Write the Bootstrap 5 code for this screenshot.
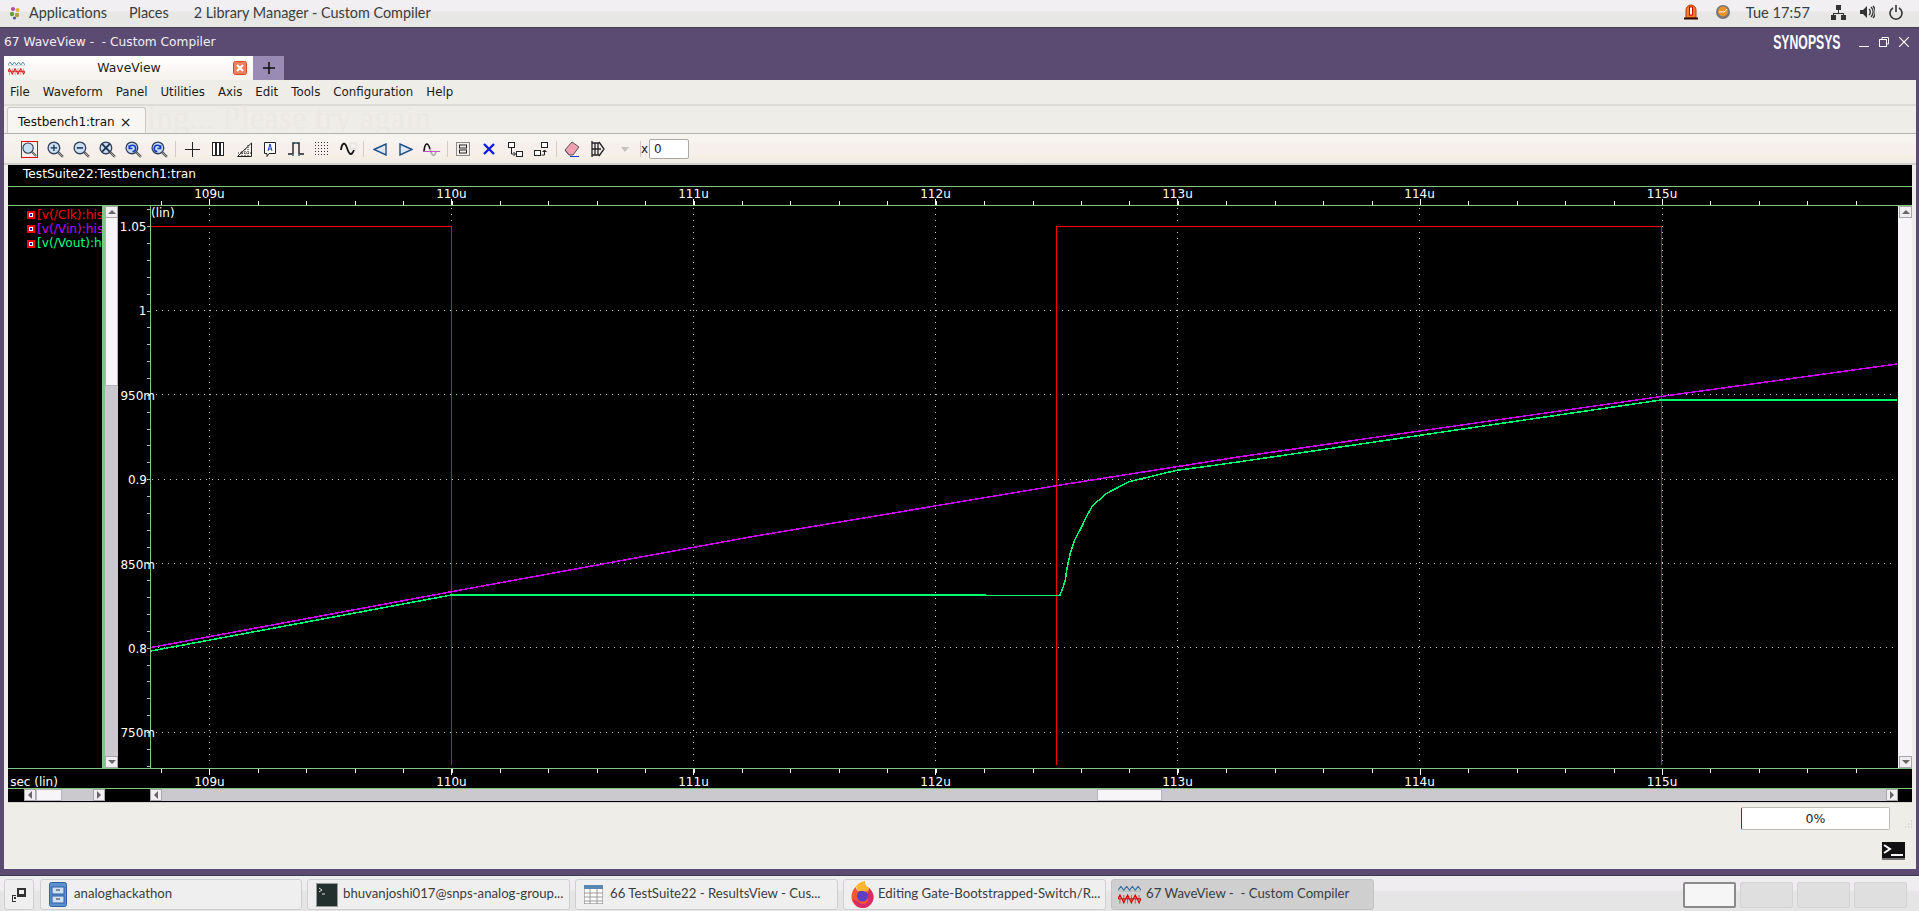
<!DOCTYPE html>
<html lang="en">
<head>
<meta charset="utf-8">
<title>WaveView</title>
<link href="https://cdn.jsdelivr.net/npm/bootstrap@5.3.0/dist/css/bootstrap.min.css" rel="stylesheet">
<style>
html,body{height:911px;overflow:hidden;background:#5b4a72}
body{font-family:"DejaVu Sans",sans-serif;font-size:12px;color:#2e3436}
.ui{font-family:Lato,"Noto Sans",sans-serif}
svg{display:block;flex:none}
.gnome-bar{height:28px;padding-bottom:2px;background:linear-gradient(#f1eff2 0,#f1eff2 40%,#e7e7e5 45%,#e7e7e5 100%);border-bottom:1px solid #45414f;font-size:14.4px;color:#3a3d3e;flex:none}
.gnome-app{margin-left:9px}
.gnome-places{margin-left:22px}
.gnome-win{margin-left:25px}
.gnome-clock{margin-left:16px;font-size:14.6px}
.gnome-tray{margin-right:16px;gap:0}
.tray-slot{margin-left:18px}
.tray-slot2{margin-left:21px}
.tray-slot3{margin-left:14px}
.shell{flex:1;padding:0 3px 0 4px;background:#5b4a72;min-height:0}
.title-row{height:28px;color:#f2f0f5;flex:none;font-size:12.2px;padding-right:7px}
.brand{font-family:"Liberation Sans",sans-serif;font-weight:700;font-size:17px;color:#fff;margin-right:18px;line-height:1;transform:scaleX(.72) scaleY(1.15);transform-origin:right center}
.win-btns{gap:10px}
.tab-row{height:24px;flex:none}
.wave-tab{width:249px;background:linear-gradient(#fff,#f5f1ec);font-size:12.4px;color:#222;padding:0 6px 0 4px}
.wave-name{flex:1;text-align:center}
.plus-tab{width:31px;background:#9a8bb5;color:#111}
.work{flex:1;background:#efede8;min-height:0}
.menu-row{height:26px;padding-top:1px;border-bottom:2px solid #dcdbd6;padding-left:6px;gap:13px;font-size:11.8px;color:#1b1b1b;flex:none}
.doc-row{height:27px;flex:none;padding-left:3px}
.doc-tab{width:139px;height:27px;margin-top:1px;background:#f8f6f2;border:1px solid #c9c8c3;border-bottom:0;border-radius:3px 3px 0 0;padding:2px 0 0 10px;font-size:12px;color:#111;flex:none}
.doc-x{margin-left:5px;font-size:14px;line-height:1}
.ghost{font-family:"Liberation Serif",serif;font-size:33px;line-height:25px;color:#ebe9e4;margin-left:1px;white-space:nowrap}
.tool-row{height:32px;flex:none;border-top:1px solid #b3b3ae;border-bottom:2px solid #d0d0cc;background:linear-gradient(#f6f4ef 0,#f6f4ef 30%,#f6efeb 35%,#f6efeb 70%,#f5efe6 75%,#efede8 100%);padding:1px 0 0 12px}
.tool-i{width:26px;display:flex;justify-content:center;flex:none}
.tool-sep{width:5.5px;flex:none;display:flex;justify-content:center;height:16px}
.tool-sep::after{content:"";width:1px;background:#cfcdc8;height:100%}
.tool-sep.wide{width:7px}
.tool-active svg{outline:1.5px solid #e00}
.x-label{font-size:12px;color:#222;width:8px;margin-left:-2px}
.x-field{width:40px;height:20px;background:#fff;border:1px solid #a9a8a3;border-radius:2px;padding-left:4px;line-height:18px;color:#222}
.panel{height:637px;margin:0 4px;background:#000;color:#fff;flex:none;box-shadow:0 1px 0 #d5d4cf}
.panel-head{height:22px;border-bottom:1px solid #86c286;padding-left:15px;flex:none;line-height:19px;font-size:12.2px}
.ruler{height:19px;flex:none;border-bottom:1px solid #86c286}
.mid{height:562px;flex:none}
.legend{width:94px;flex:none;overflow:hidden;padding:2px 0 0 19px;font-size:12.2px;line-height:14.2px;white-space:nowrap}
.legend-row{gap:2px}
.lg-mark{width:8px;height:8px;background:#fff;border:2px solid #f00;flex:none;position:relative}
.lg-mark::after{content:"";position:absolute;left:1px;top:1px;width:2px;height:2px;background:#00c}
.c-clk{color:#f00}.c-vin{color:#c000ff}.c-vout{color:#00ff7f}
.sash{width:3px;background:#86c286;flex:none}
.vsb{width:13px;flex:none;background:#cbc9cd}
.vsb.free{width:14px;background:#f8f5f8}
.vthumb{height:168px;background:#f8f5f8;border:1px solid #b6b4b8;border-top:0;flex:none}
.vfill{flex:1}
.sb-btn{background:#f0eef0;border:1px solid #a9a7ab;display:flex;align-items:center;justify-content:center;color:#555;flex:none}
.sb-btn.v{height:12px;width:13px}
.sb-btn.h{width:12px;height:12px}
.tri-u{width:0;height:0;border-left:4px solid transparent;border-right:4px solid transparent;border-bottom:4px solid #666}
.tri-d{width:0;height:0;border-left:4px solid transparent;border-right:4px solid transparent;border-top:4px solid #666}
.tri-l{width:0;height:0;border-top:4px solid transparent;border-bottom:4px solid transparent;border-right:4px solid #666}
.tri-r{width:0;height:0;border-top:4px solid transparent;border-bottom:4px solid transparent;border-left:4px solid #666}
.bottom-ruler{height:21px;flex:none;border-top:1px solid #86c286;border-bottom:1px solid #86c286}
.hsb-row{height:12px;flex:none}
.gap-a{width:16px}.gap-b{width:45px}.gap-c{width:14px}
.h-thumb{background:#f8f5f8;height:12px;border:1px solid #b6b4b8;flex:none}
.h-thumb.small{width:26px}
.h-thumb.big{width:65px}
.h-track{background:#cbc9cd;height:12px}
.t1{width:31px}.t2{width:935px}.t3{flex:1}
.status{flex:1;position:relative;min-height:0}
.progress-box{position:absolute;left:1737px;top:5px;width:149px;height:23px;background:#fff;border:1px solid #bdbbb6;border-left:1px solid #c00;border-radius:2px;text-align:center;line-height:21px;color:#222;font-size:12.5px}
.grip{position:absolute;left:1899px;top:18px}
.term-btn{position:absolute;left:1878px;top:40px}
.win-foot{height:6px;flex:none}
.task{height:36px;flex:none;border-top:1px solid #3f3a4a;background:linear-gradient(#efedf0 0,#efedf0 40%,#e6e5e6 45%);font-size:13.2px;color:#3a3d3e;padding:3px 0 1px 4px}
.task-btn{height:31px;background:#f0eff0;border:1px solid #cfcfcf;border-radius:3px;padding-left:8px;margin-right:5px;white-space:nowrap;overflow:hidden;gap:7px;flex:none}
.task-btn span{margin-top:-2px}
.tb0{width:30px;padding-left:6px}
.tb1{width:262px;margin-left:1px}.tb2{width:263px;gap:5px}.tb3{width:263px}.tb4{width:263px;gap:4px;padding-left:7px}.tb5{width:263px;gap:5px;padding-left:6px;background:#cfcfcf;border-color:#c2c2c2;margin-right:0}
.pager{margin-left:auto;margin-right:12px;gap:4px}
.ws{width:53px;height:26px;background:#dfdfdf;border:1px solid #d3d3d3;border-radius:2px}
.ws.on{background:#f6f6f6;border:2px solid #8a8a8a}
</style>
</head>
<body class="d-flex flex-column">
<svg class="d-none" aria-hidden="true">
<defs>
<symbol id="mag" viewBox="0 0 16 16"><circle cx="6.500" cy="6.500" r="5.500" fill="#c9dff2" stroke="#2f3d58" stroke-width="1.200"/><path d="M10.500 10.500L15 15" stroke="#555" stroke-width="2.200"/><path d="M11 11L15 15" stroke="#ddd" stroke-width=".6"/></symbol>
<symbol id="wave" viewBox="0 0 24 20"><path d="M0 5l3-4 3 4 3-4 3 4 3-4 3 4 3-4 3 4" fill="none" stroke="#3a6ea5" stroke-width="1.200"/><path d="M0 6h24" stroke="#8aa" stroke-width=".6"/><path d="M0 14h24" stroke="#c00" stroke-width="1"/><path d="M0 14l2-4 2 4 2 4 2-4 2-4 2 4 2 4 2-4 2-4 2 4 2 4 2-4" fill="none" stroke="#d00" stroke-width="1.200"/><path d="M2 10v9M6 10v9M10 10v9M14 10v9M18 10v9M22 10v9" stroke="#c00" stroke-width=".6"/></symbol>
</defs>
</svg>

<header class="gnome-bar ui d-flex align-items-center">
  <svg class="gnome-app" width="12" height="14" viewBox="0 0 12 14"><circle cx="4" cy="3" r="2" fill="#b04aa0"/><circle cx="8.500" cy="4" r="2" fill="#e0b030"/><circle cx="3" cy="8" r="2.200" fill="#6a9a3a"/><circle cx="8" cy="9" r="2.200" fill="#b0a040"/><circle cx="5.500" cy="12" r="1.600" fill="#5a5aa0"/></svg>
  <span class="ms-2">Applications</span>
  <span class="gnome-places">Places</span>
  <span class="gnome-win">2 Library Manager - Custom Compiler</span>
  <div class="ms-auto gnome-tray d-flex align-items-center">
    <svg width="14" height="16" viewBox="0 0 14 16"><path d="M2 14V6a5 5 0 0 1 10 0v8z" fill="#f08020" stroke="#b04010"/><path d="M0 14.500h14" stroke="#300" stroke-width="2"/><rect x="5.500" y="3" width="3" height="8" fill="#fff" stroke="#c00"/></svg>
    <svg class="tray-slot" width="14" height="14" viewBox="0 0 14 14"><circle cx="7" cy="7" r="7" fill="#777"/><circle cx="7" cy="6.500" r="5" fill="#e8922a"/><path d="M3 7c3-1 5 2 8-3" stroke="#fff" fill="none"/></svg>
    <span class="gnome-clock">Tue 17:57</span>
    <svg class="tray-slot2" width="15" height="15" viewBox="0 0 15 15" fill="#333"><rect x="5" y="0" width="5" height="5"/><rect x="0" y="10" width="5" height="5"/><rect x="10" y="10" width="5" height="5"/><path d="M7 5v3H2v2h1V9h9v1h1V8H8V5z"/></svg>
    <svg class="tray-slot3" width="15" height="14" viewBox="0 0 15 14"><path d="M0 5h3l4-4v12l-4-4H0z" fill="#333"/><path d="M9 4a4 4 0 0 1 0 6M11 2a7 7 0 0 1 0 10M13 1a9 9 0 0 1 0 12" stroke="#333" fill="none" stroke-width="1.300"/></svg>
    <svg class="tray-slot3" width="14" height="15" viewBox="0 0 14 15"><path d="M4 3a6 6 0 1 0 6 0" stroke="#333" fill="none" stroke-width="1.600"/><path d="M7 0v7" stroke="#333" stroke-width="1.600"/></svg>
  </div>
</header>

<main class="shell d-flex flex-column">
  <div class="title-row d-flex align-items-center">
    <span>67 WaveView -&nbsp; - Custom Compiler</span>
    <span class="brand ms-auto">SYNOPSYS</span>
    <div class="win-btns d-flex align-items-center">
      <svg width="10" height="10" viewBox="0 0 10 10"><path d="M0 9.500h10" stroke="#fff"/></svg>
      <svg width="10" height="10" viewBox="0 0 10 10" fill="none" stroke="#fff"><rect x=".5" y="2.500" width="7" height="7"/><path d="M3 2.500V.5h6.500V7H7.500"/></svg>
      <svg width="10" height="10" viewBox="0 0 10 10"><path d="M0 0l10 10M10 0L0 10" stroke="#fff" stroke-width="1.200"/></svg>
    </div>
  </div>
  <div class="tab-row d-flex">
    <div class="wave-tab d-flex align-items-center">
      <svg width="17" height="15" viewBox="0 0 24 20"><use href="#wave"/></svg>
      <span class="wave-name">WaveView</span>
      <svg width="14" height="14" viewBox="0 0 14 14"><rect x=".5" y=".5" width="13" height="13" rx="2" fill="#ee8060" stroke="#d8482a"/><path d="M4 4l6 6M10 4l-6 6" stroke="#fff" stroke-width="2"/></svg>
    </div>
    <div class="plus-tab d-flex align-items-center justify-content-center">
      <svg width="12" height="12" viewBox="0 0 12 12"><path d="M6 0v12M0 6h12" stroke="#111" stroke-width="1.500"/></svg>
    </div>
  </div>
  <div class="work d-flex flex-column">
    <nav class="menu-row d-flex align-items-center">
      <span>File</span><span>Waveform</span><span>Panel</span><span>Utilities</span><span>Axis</span><span>Edit</span><span>Tools</span><span>Configuration</span><span>Help</span>
    </nav>
    <div class="doc-row d-flex">
      <div class="doc-tab d-flex align-items-center"><span>Testbench1:tran</span><span class="doc-x">×</span></div>
      <span class="ghost">ing... Please try again</span>
    </div>
    <div class="tool-row d-flex align-items-center">
      <div class="tool-i tool-active"><svg width="15" height="15" viewBox="0 0 16 16"><use href="#mag"/></svg></div>
      <div class="tool-i"><svg width="17" height="17" viewBox="0 0 16 16"><use href="#mag"/><path d="M3.500 6.500h6M6.500 3.500v6" stroke="#1a2a44" stroke-width="1.200"/></svg></div>
      <div class="tool-i"><svg width="17" height="17" viewBox="0 0 16 16"><use href="#mag"/><path d="M3.500 6.500h6" stroke="#1a2a44" stroke-width="1.400"/></svg></div>
      <div class="tool-i"><svg width="17" height="17" viewBox="0 0 16 16"><use href="#mag"/><path d="M3 3l7 7M10 3l-7 7" stroke="#1a2a44" stroke-width="1.600"/></svg></div>
      <div class="tool-i"><svg width="17" height="17" viewBox="0 0 16 16"><use href="#mag"/><path d="M4 7a3 3 0 1 1 3 3M4 4v3h3" fill="none" stroke="#1438c8" stroke-width="1.500"/></svg></div>
      <div class="tool-i"><svg width="17" height="17" viewBox="0 0 16 16"><use href="#mag"/><path d="M9 7a3 3 0 1 0-3 3M9 4v3H6" fill="none" stroke="#1438c8" stroke-width="1.500"/></svg></div>
      <div class="tool-sep wide"></div>
      <div class="tool-i"><svg width="15" height="15" viewBox="0 0 15 15"><path d="M0 7.500h15M7.500 0v15" stroke="#222"/></svg></div>
      <div class="tool-i"><svg width="12" height="14" viewBox="0 0 12 14" fill="#fff" stroke="#222"><rect x=".5" y=".5" width="3" height="13"/><rect x="4.500" y=".5" width="3" height="13"/><rect x="8.500" y=".5" width="3" height="13"/></svg></div>
      <div class="tool-i"><svg width="15" height="15" viewBox="0 0 15 15" fill="none" stroke="#222"><path d="M.5 14.500h14V1z"/><path d="M5 14V9M8 14V6M11 14V3M1 11h13" stroke-dasharray="1 1"/></svg></div>
      <div class="tool-i"><svg width="12" height="16" viewBox="0 0 12 16"><path d="M.5 1.500h11v11H5l-2 3v-3H.5z" fill="#fff" stroke="#222"/><path d="M4 10l2-7 2 7M4.600 8h2.800" fill="none" stroke="#1438c8"/></svg></div>
      <div class="tool-i"><svg width="16" height="15" viewBox="0 0 16 15"><path d="M0 12h5V1h6v11h5" fill="none" stroke="#222" stroke-width="1.400"/><path d="M5 14v-2M11 14v-2M7 1h2" stroke="#58858f" stroke-width="2"/></svg></div>
      <div class="tool-i"><svg width="14" height="14" viewBox="0 0 14 14" fill="none"><path d="M0 .5h14M0 3.500h14M0 6.500h14M0 9.500h14M0 12.500h14" stroke="#333" stroke-dasharray="1 2"/></svg></div>
      <div class="tool-i"><svg width="17" height="15" viewBox="0 0 17 15" fill="none"><path d="M1 8C2 0 5 0 7 6s4 9 7 2" stroke="#111" stroke-width="1.800"/><rect x="10" y="1" width="6" height="6" stroke="#ddd"/></svg></div>
      <div class="tool-sep"></div>
      <div class="tool-i"><svg width="14" height="13" viewBox="0 0 14 13"><path d="M1 6.500L13 1v11z" fill="#dce8f2" stroke="#1c4e86" stroke-width="1.400"/></svg></div>
      <div class="tool-i"><svg width="14" height="13" viewBox="0 0 14 13"><path d="M13 6.500L1 1v11z" fill="#dce8f2" stroke="#1c4e86" stroke-width="1.400"/></svg></div>
      <div class="tool-i"><svg width="17" height="15" viewBox="0 0 17 15" fill="none"><path d="M1 9C2 0 5 0 7 7" stroke="#111" stroke-width="1.600"/><path d="M7 7c2 8 5 8 6 2" stroke="#aaa" stroke-width="1.600"/><path d="M0 9.500h17" stroke="#c050c0"/></svg></div>
      <div class="tool-sep"></div>
      <div class="tool-i"><svg width="14" height="14" viewBox="0 0 14 14" fill="none" stroke="#222"><rect x=".5" y=".5" width="13" height="13" stroke-dasharray="1 1"/><rect x="3.500" y="3" width="7" height="3"/><rect x="3.500" y="8" width="7" height="3"/></svg></div>
      <div class="tool-i"><svg width="12" height="12" viewBox="0 0 12 12"><path d="M1 1l10 10M11 1L1 11" stroke="#0a1ae8" stroke-width="2.400"/></svg></div>
      <div class="tool-i"><svg width="15" height="15" viewBox="0 0 15 15" fill="#fff" stroke="#222"><rect x=".5" y=".5" width="6" height="5"/><rect x="8.500" y="9.500" width="6" height="5"/><path d="M3.500 6v6h4M5.500 10l2 2-2 2" fill="none"/></svg></div>
      <div class="tool-i"><svg width="15" height="15" viewBox="0 0 15 15" fill="#fff" stroke="#222"><rect x="7.500" y=".5" width="6" height="5"/><rect x=".5" y="8.500" width="6" height="5"/><path d="M10.500 9v4h-3" fill="none"/><path d="M8.500 10l2-2 2 2" fill="#222"/></svg></div>
      <div class="tool-sep"></div>
      <div class="tool-i"><svg width="17" height="16" viewBox="0 0 17 16"><path d="M1 9l7-8 7 5-6 8H5z" fill="#f0a0b0" stroke="#555"/><path d="M1 9l4 5" stroke="#555"/><path d="M6 15.500h9" stroke="#1438c8"/></svg></div>
      <div class="tool-i"><svg width="15" height="16" viewBox="0 0 15 16" fill="none" stroke="#222" stroke-width="1.300"><path d="M1 0v16M1 2h7M1 8h9M1 14h7M4 2v12M7 2v12M8 1l5 7-5 7"/></svg></div>
      <div class="tool-i"><svg width="8" height="5" viewBox="0 0 8 5"><path d="M0 0h8L4 5z" fill="#c4c3be"/></svg></div>
      <div class="tool-sep"></div>
      <span class="x-label">x</span>
      <div class="x-field">0</div>
    </div>

    <section class="panel d-flex flex-column">
      <div class="panel-head">TestSuite22:Testbench1:tran</div>
      <div class="ruler">
        <svg width="1904" height="18" viewBox="8 187 1904 18" shape-rendering="crispEdges" font-family="DejaVu Sans" font-size="12" fill="#fff" text-anchor="middle">
          <line x1="161" x2="1860" y1="203" y2="203" stroke="#fff" stroke-width="4" stroke-dasharray="1 47.420"/>
          <line x1="209" x2="1860" y1="202" y2="202" stroke="#fff" stroke-width="6" stroke-dasharray="1 241.100"/>
          <text x="209.400" y="197.500">109u</text><text x="451.400" y="197.500">110u</text><text x="693.500" y="197.500">111u</text><text x="935.500" y="197.500">112u</text><text x="1177.500" y="197.500">113u</text><text x="1419.600" y="197.500">114u</text><text x="1662" y="197.500">115u</text>
        </svg>
      </div>
      <div class="mid d-flex">
        <aside class="legend">
          <div class="legend-row d-flex align-items-center c-clk"><span class="lg-mark"></span><span>[v(/Clk):his</span></div>
          <div class="legend-row d-flex align-items-center c-vin"><span class="lg-mark"></span><span>[v(/Vin):his</span></div>
          <div class="legend-row d-flex align-items-center c-vout"><span class="lg-mark"></span><span>[v(/Vout):h</span></div>
        </aside>
        <div class="sash"></div>
        <div class="vsb d-flex flex-column">
          <div class="sb-btn v"><span class="tri-u"></span></div>
          <div class="vthumb"></div>
          <div class="vfill"></div>
          <div class="sb-btn v"><span class="tri-d"></span></div>
        </div>
        <svg width="1780" height="562" viewBox="118 206 1780 562" font-family="DejaVu Sans" font-size="12" fill="#fff">
          <g stroke="#ccc" stroke-dasharray="1 5" shape-rendering="crispEdges">
            <path d="M156 310.500H1896M156 394.500H1896M152 479.500H1896M156 563.500H1896M152 647.500H1896M156 732.500H1896"/>
            <path d="M209.500 208V765M451.500 208V765M693.500 208V765M935.500 208V765M1177.500 208V765M1419.500 208V765M1662.500 208V765"/>
          </g>
          <g shape-rendering="crispEdges">
            <line x1="150.500" x2="150.500" y1="206" y2="768" stroke="#86c286"/>
            <line x1="148.500" x2="148.500" y1="209.400" y2="768" stroke="#bbb" stroke-width="3" stroke-dasharray="1 15.860"/>
          </g>
          <text x="151" y="217">(lin)</text>
          <g text-anchor="end">
            <text x="146.500" y="230.500">1.05</text><text x="146.500" y="315">1</text><text x="155" y="399.500">950m</text><text x="147" y="484">0.9</text><text x="155" y="568.500">850m</text><text x="147" y="652.500">0.8</text><text x="155" y="737">750m</text>
          </g>
          <path d="M151 226.500H451.500V765M1056.500 765V226.500H1661.500V765" fill="none" stroke="#f00" shape-rendering="crispEdges"/>
          <polyline fill="none" stroke="#cc00ff" stroke-width="1.500" shape-rendering="crispEdges" points="151,647.500 451.400,591.700 750,537 1056,485.700 1240,456.700 1661,396.500 1897,364"/>
          <polyline fill="none" stroke="#00ff70" stroke-width="1.500" shape-rendering="crispEdges" points="151,651 451.400,595 1060,595.300 1063.300,586.700 1065.300,580 1066.700,570 1068.300,561.700 1070.700,551.700 1074,541.700 1077.300,535 1081.700,526.700 1086.700,516 1091.700,507.300 1095,503.300 1100,499.300 1106.700,493.300 1115,489 1128.300,482 1143.300,478.300 1160,474.300 1176.700,470.300 1200,467.300 1240,461.700 1661,400 1661.500,400 1897,400"/>
        </svg>
        <div class="vsb free d-flex flex-column align-items-end">
          <div class="sb-btn v"><span class="tri-u"></span></div>
          <div class="vfill"></div>
          <div class="sb-btn v"><span class="tri-d"></span></div>
        </div>
      </div>
      <div class="bottom-ruler">
        <svg width="1904" height="19" viewBox="8 769 1904 19" shape-rendering="crispEdges" font-family="DejaVu Sans" font-size="12" fill="#fff" text-anchor="middle">
          <line x1="161" x2="1860" y1="771" y2="771" stroke="#fff" stroke-width="4" stroke-dasharray="1 47.420"/>
          <line x1="209" x2="1860" y1="772" y2="772" stroke="#fff" stroke-width="6" stroke-dasharray="1 241.100"/>
          <text x="34" y="786">sec (lin)</text>
          <text x="209.400" y="786">109u</text><text x="451.400" y="786">110u</text><text x="693.500" y="786">111u</text><text x="935.500" y="786">112u</text><text x="1177.500" y="786">113u</text><text x="1419.600" y="786">114u</text><text x="1662" y="786">115u</text>
        </svg>
      </div>
      <div class="hsb-row d-flex">
        <div class="gap-a"></div>
        <div class="sb-btn h"><span class="tri-l"></span></div>
        <div class="h-thumb small"></div>
        <div class="h-track t1"></div>
        <div class="sb-btn h"><span class="tri-r"></span></div>
        <div class="gap-b"></div>
        <div class="sb-btn h"><span class="tri-l"></span></div>
        <div class="h-track t2"></div>
        <div class="h-thumb big"></div>
        <div class="h-track t3"></div>
        <div class="sb-btn h"><span class="tri-r"></span></div>
        <div class="gap-c"></div>
      </div>
    </section>

    <div class="status">
      <div class="progress-box">0%</div>
      <svg class="grip" width="10" height="10" viewBox="0 0 10 10"><path d="M8 1h1M8 4h1M5 4h1M8 7h1M5 7h1M2 7h1" stroke="#bbb"/></svg>
      <svg class="term-btn" width="23" height="18" viewBox="0 0 23 18"><rect width="23" height="18" fill="#111"/><rect y="16" width="23" height="2" fill="#777"/><path d="M2 3l6 4-6 4" fill="none" stroke="#fff" stroke-width="2"/><path d="M9 13h12" stroke="#fff" stroke-width="2"/></svg>
    </div>
  </div>
  <div class="win-foot"></div>
</main>

<footer class="task ui d-flex">
  <div class="task-btn tb0 d-flex align-items-center"><svg width="16" height="16" viewBox="0 0 16 16"><rect x="6" y="1" width="9" height="9" fill="#333"/><rect x="8" y="3" width="5" height="4" fill="#eee"/><path d="M1 8h4v1H2v5h3v1H1z" fill="#333"/><rect x="3" y="10" width="2" height="2" fill="#333"/></svg></div>
  <div class="task-btn tb1 d-flex align-items-center"><svg width="18" height="25" viewBox="0 0 18 25"><rect x=".5" y=".5" width="17" height="24" rx="2" fill="#5b8fd0" stroke="#2f5f9f"/><rect x="3" y="5" width="12" height="7" fill="#cfe0f2" stroke="#2f5f9f"/><rect x="3" y="14" width="12" height="7" fill="#cfe0f2" stroke="#2f5f9f"/><path d="M7 8h4M7 17h4" stroke="#333"/></svg><span>analoghackathon</span></div>
  <div class="task-btn tb2 d-flex align-items-center"><svg width="22" height="24" viewBox="0 0 22 24"><rect x=".5" y=".5" width="21" height="23" fill="#22302e" stroke="#999"/><path d="M3 5l3 2-3 2M6 11h3" stroke="#ddd" fill="none"/></svg><span>bhuvanjoshi017@snps-analog-group...</span></div>
  <div class="task-btn tb3 d-flex align-items-center"><svg width="19" height="19" viewBox="0 0 19 19"><rect width="19" height="19" fill="#fff" stroke="#777"/><rect width="19" height="4" fill="#5a86b0"/><path d="M0 8h19M0 12h19M0 16h19M6 4v15M13 4v15" stroke="#999"/></svg><span>66 TestSuite22 - ResultsView - Cus...</span></div>
  <div class="task-btn tb4 d-flex align-items-center"><svg width="23" height="28" viewBox="0 0 23 28"><path d="M11.500 27a11 11 0 0 1-11-11C.5 11 3 7 5 6c0 2 1 3 2 4 1-4 4-7 7-10-1 3 1 5 4 7 3 3 4.500 6 4.500 9a11 11 0 0 1-11 11z" fill="#f4562f"/><path d="M11.500 27a11 11 0 0 0 11-11c0-3-1.500-6-4.500-9 1 4-1 6-4 7 4 1 5 8-1 9-3 0-5-1-6-3-2 0-4-1-5-3 0 6 5 10 9.500 10z" fill="#d92b6b"/><circle cx="11.500" cy="15" r="5.500" fill="#5b3fc4"/><path d="M5 6c1-3 4-5 9-6-1 3 1 5 4 7 0 3-3 4-6 3-2 0-4 0-5 0z" fill="#ffb52e"/></svg><span>Editing Gate-Bootstrapped-Switch/R...</span></div>
  <div class="task-btn tb5 d-flex align-items-center"><svg width="23" height="20" viewBox="0 0 24 20"><use href="#wave"/></svg><span>67 WaveView -&nbsp; - Custom Compiler</span></div>
  <div class="pager d-flex align-items-center">
    <div class="ws on"></div><div class="ws"></div><div class="ws"></div><div class="ws"></div>
  </div>
</footer>
</body>
</html>
